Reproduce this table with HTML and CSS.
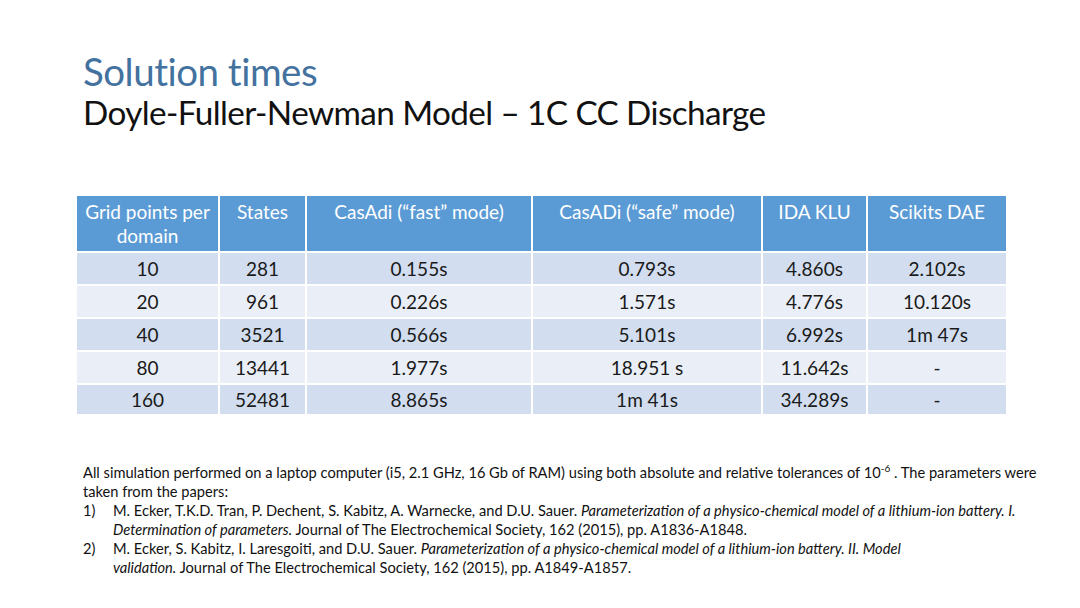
FILE: index.html
```html
<!DOCTYPE html>
<html>
<head>
<meta charset="utf-8">
<link rel="stylesheet" href="styles.css">
</head>
<body>
<div class="slide">
  <header class="titles">
    <h1 class="title">Solution times</h1>
    <h2 class="subtitle">Doyle-Fuller-Newman Model – 1C CC Discharge</h2>
  </header>
  <table class="results">
    <colgroup>
      <col class="c1"><col class="c2"><col class="c3"><col class="c4"><col class="c5"><col class="c6">
    </colgroup>
    <thead>
      <tr>
        <th>Grid points per domain</th>
        <th>States</th>
        <th>CasAdi (“fast” mode)</th>
        <th>CasADi (“safe” mode)</th>
        <th>IDA KLU</th>
        <th>Scikits DAE</th>
      </tr>
    </thead>
    <tbody>
      <tr><td>10</td><td>281</td><td>0.155s</td><td>0.793s</td><td>4.860s</td><td>2.102s</td></tr>
      <tr><td>20</td><td>961</td><td>0.226s</td><td>1.571s</td><td>4.776s</td><td>10.120s</td></tr>
      <tr><td>40</td><td>3521</td><td>0.566s</td><td>5.101s</td><td>6.992s</td><td>1m 47s</td></tr>
      <tr><td>80</td><td>13441</td><td>1.977s</td><td>18.951 s</td><td>11.642s</td><td>-</td></tr>
      <tr class="last"><td>160</td><td>52481</td><td>8.865s</td><td>1m 41s</td><td>34.289s</td><td>-</td></tr>
    </tbody>
  </table>
  <div class="notes">
    <p class="intro">All simulation performed on a laptop computer (i5, 2.1 GHz, 16 Gb of RAM) using both absolute and relative tolerances of 10<sup>-6</sup> . The parameters were<br>taken from the papers:</p>
    <ol class="refs">
      <li><span class="num">1)</span><span class="ref">M. Ecker, T.K.D. Tran, P. Dechent, S. Kabitz, A. Warnecke, and D.U. Sauer. <em>Parameterization of a physico-chemical model of a lithium-ion battery. I.</em><br><em>Determination of parameters.</em> Journal of The Electrochemical Society, 162 (2015), pp. A1836-A1848.</span></li>
      <li><span class="num">2)</span><span class="ref">M. Ecker, S. Kabitz, I. Laresgoiti, and D.U. Sauer. <em>Parameterization of a physico-chemical model of a lithium-ion battery. II. Model</em><br><em>validation.</em> Journal of The Electrochemical Society, 162 (2015), pp. A1849-A1857.</span></li>
    </ol>
  </div>
</div>
</body>
</html>
```
FILE: styles.css
```css
html, body {
  margin: 0;
  padding: 0;
  background: #ffffff;
}
.slide {
  width: 1080px;
  height: 608px;
  box-sizing: border-box;
  padding: 50px 0 0 0;
  font-family: Lato, "Open Sans", sans-serif;
  color: #1a1a1a;
  overflow: hidden;
}
.titles {
  padding-left: 83px;
}
.title {
  margin: 0;
  font-weight: 400;
  font-size: 38.5px;
  line-height: 42px;
  color: #44729f;
  letter-spacing: -0.5px;
}
.subtitle {
  margin: 0;
  font-weight: 400;
  font-size: 33.3px;
  line-height: 40px;
  color: #111;
  letter-spacing: -0.6px;
}
.results {
  margin: 62px 0 0 75px;
  border-collapse: collapse;
  table-layout: fixed;
  width: 931px;
  font-size: 19px;
}
.c1 { width: 143px; }
.c2 { width: 87px; }
.c3 { width: 226px; }
.c4 { width: 230px; }
.c5 { width: 105px; }
.c6 { width: 140px; }
.results th, .results td {
  border: 2px solid #ffffff;
  text-align: center;
  padding: 0 2px;
  white-space: nowrap;
}
.results th {
  background: #5b9bd5;
  color: #ffffff;
  font-weight: 400;
  height: 51px;
  vertical-align: top;
  padding-top: 4px;
  line-height: 24px;
}
.results th:first-child { white-space: normal; }
.results td {
  height: 31px;
  line-height: 20px;
  color: #1a1a1a;
}
.results tbody tr:nth-child(odd) td { background: #d2deef; }
.results tbody tr:nth-child(even) td { background: #eaeff7; }
.results tbody tr.last td { height: 29px; }
.notes {
  margin: 47px 0 0 83px;
  font-size: 14.65px;
  line-height: 19px;
  color: #111;
  white-space: nowrap;
}
.intro { margin: 0; }
.intro sup {
  font-size: 10px;
  line-height: 0;
  vertical-align: 6px;
}
.refs {
  margin: 0;
  padding: 0;
  list-style: none;
}
.refs li {
  display: flex;
}
.num {
  flex: 0 0 30px;
}
```
